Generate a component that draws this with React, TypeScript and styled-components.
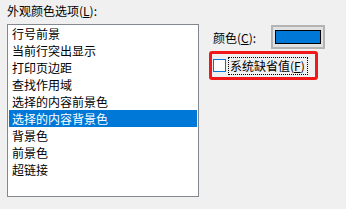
import styled, { createGlobalStyle } from 'styled-components';

const items = [
  '行号前景',
  '当前行突出显示',
  '打印页边距',
  '查找作用域',
  '选择的内容前景色',
  '选择的内容背景色',
  '背景色',
  '前景色',
  '超链接',
];

const selectedIndex = 5;

const GlobalStyle = createGlobalStyle`
  html, body {
    margin: 0;
    padding: 0;
    background: #f0f0f0;
  }
  body {
    font-family: "Noto Sans CJK SC", "Noto Sans", sans-serif;
    font-size: 12px;
    color: #000;
  }
`;

const Page = styled.div`
  display: flex;
  width: 346px;
  height: 209px;
  padding: 3px 0 0 7px;
  box-sizing: border-box;
  background: #f0f0f0;
`;

const LeftColumn = styled.div`
  display: flex;
  flex-direction: column;
  width: 192px;
`;

const GroupLabel = styled.div`
  height: 21px;
  line-height: 16px;
  white-space: nowrap;
`;

const Key = styled.span`
  text-decoration: underline;
  text-underline-offset: 1px;
`;

const ListBox = styled.ul`
  list-style: none;
  margin: 0;
  padding: 0 1px;
  height: 173px;
  box-sizing: border-box;
  border: 1px solid #828790;
  background: #fff;
`;

const ListItem = styled.li<{ $selected?: boolean }>`
  height: 17px;
  line-height: 17px;
  padding-left: 3px;
  white-space: nowrap;
  background: ${(p) => (p.$selected ? '#0078d7' : 'transparent')};
  color: ${(p) => (p.$selected ? '#fff' : '#000')};
`;

const RightColumn = styled.div`
  display: flex;
  flex-direction: column;
  margin-left: 10px;
  padding-top: 22px;
`;

const ColorRow = styled.div`
  display: flex;
  align-items: center;
  height: 24px;
  padding-left: 4px;
`;

const ColorLabel = styled.span`
  width: 58px;
  white-space: nowrap;
`;

const ColorButton = styled.button`
  display: flex;
  align-items: center;
  justify-content: center;
  width: 54px;
  height: 24px;
  padding: 0;
  box-sizing: border-box;
  border: 2px solid #b4b4b4;
  background: #e1e1e1;
`;

const Swatch = styled.span<{ $color: string }>`
  display: block;
  width: 46px;
  height: 14px;
  box-sizing: border-box;
  border: 1px solid #000;
  background: ${(p) => p.$color};
`;

const Highlight = styled.div`
  display: flex;
  align-items: center;
  width: 109px;
  height: 29px;
  margin-top: 2px;
  padding-left: 1px;
  box-sizing: border-box;
  border: 3px solid #f01818;
  border-radius: 3px;
`;

const CheckBox = styled.span`
  display: block;
  width: 13px;
  height: 13px;
  box-sizing: border-box;
  border: 1px solid #0078d7;
  background: #fff;
`;

const CheckLabel = styled.span`
  margin-left: 2px;
  height: 18px;
  line-height: 16px;
  padding: 0 2px 0 1px;
  box-sizing: border-box;
  border: 1px dotted #000;
  white-space: nowrap;
`;

export default function App() {
  return (
    <>
      <GlobalStyle />
      <Page>
        <LeftColumn>
          <GroupLabel>
            外观颜色选项(<Key>L</Key>):
          </GroupLabel>
          <ListBox>
            {items.map((item, i) => (
              <ListItem key={item} $selected={i === selectedIndex}>
                {item}
              </ListItem>
            ))}
          </ListBox>
        </LeftColumn>
        <RightColumn>
          <ColorRow>
            <ColorLabel>
              颜色(<Key>C</Key>):
            </ColorLabel>
            <ColorButton>
              <Swatch $color="#0078d7" />
            </ColorButton>
          </ColorRow>
          <Highlight>
            <CheckBox />
            <CheckLabel>
              系统缺省值(<Key>F</Key>)
            </CheckLabel>
          </Highlight>
        </RightColumn>
      </Page>
    </>
  );
}
